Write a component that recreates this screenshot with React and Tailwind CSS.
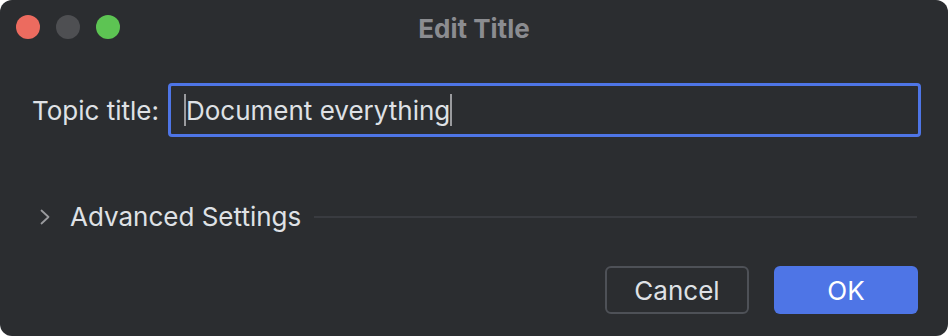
import React from 'react';

export default function App() {
  return (
    <div className="w-[948px] h-[336px] bg-white" style={{ fontFamily: 'Inter, "Noto Sans", sans-serif' }}>
      <div className="w-full h-full rounded-[12px] bg-[#2b2d30] flex flex-col overflow-hidden">
        {/* title bar */}
        <div className="relative h-[54px] flex items-center px-[16px] gap-[16px] shrink-0">
          <span className="w-[24px] h-[24px] rounded-full bg-[#ec6b5f]" />
          <span className="w-[24px] h-[24px] rounded-full bg-[#4e4f52]" />
          <span className="w-[24px] h-[24px] rounded-full bg-[#5dc453]" />
          <div className="absolute inset-0 flex items-center justify-center pt-[2px] text-[26px] font-bold text-[#8b8c90]">Edit Title</div>
        </div>

        {/* topic row */}
        <div className="flex items-center mt-[29px] pl-[32px] pr-[27px]">
          <span className="text-[26px] text-[#dfe1e5] mr-[9px]">Topic title:</span>
          <div className="flex-1 h-[54px] rounded-[4px] border-[3px] border-[#4e75e6] flex items-center pl-[13px]">
            <span className="w-[2px] h-[32px] bg-[#9a9b9e]" />
            <span className="text-[26px] text-[#dfe1e5]">Document everything</span>
            <span className="w-[2px] h-[32px] bg-[#9a9b9e]" />
          </div>
        </div>

        {/* advanced settings */}
        <div className="flex items-center mt-[60px] pl-[40px] pr-[31px]">
          <svg width="10" height="16" viewBox="0 0 10 16" className="shrink-0">
            <polyline points="1.5,1.5 8.5,8 1.5,14.5" fill="none" stroke="#9a9b9e" strokeWidth="1.8" strokeLinecap="round" strokeLinejoin="round" />
          </svg>
          <span className="ml-[20px] text-[26px] text-[#dfe1e5]">Advanced Settings</span>
          <div className="flex-1 h-[2px] bg-[#393b40] ml-[13px]" />
        </div>

        {/* buttons */}
        <div className="flex justify-end gap-[25px] mt-[30px] pr-[30px]">
          <button className="w-[144px] h-[48px] rounded-[6px] border-[2px] border-[#4e5157] text-[26px] text-[#dfe1e5]">Cancel</button>
          <button className="w-[144px] h-[48px] rounded-[6px] bg-[#4e75e6] text-[26px] text-white">OK</button>
        </div>
      </div>
    </div>
  );
}
